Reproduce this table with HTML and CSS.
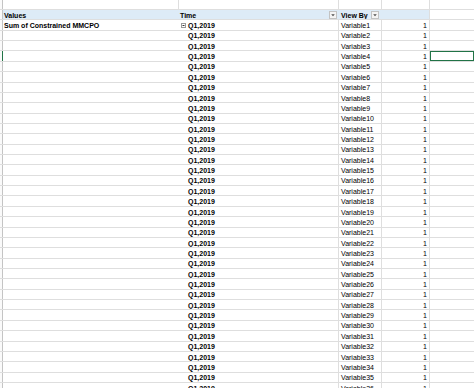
FILE: index.html
```
<!DOCTYPE html>
<html>
<head>
<meta charset="utf-8">
<link rel="stylesheet" href="styles.css">
</head>
<body>
<div class="sheet">
  <div class="row top"><div class="rh"></div><div class="ca"></div><div class="cb"></div><div class="cc"></div><div class="cd"></div><div class="ce"></div></div>
  <div class="row hdr"><div class="rh"></div><div class="ca b">Values</div><div class="cb b"><span class="grow">Time</span><span class="dd"><svg width="8" height="8" viewBox="0 0 8 8"><path d="M2.2 3.2h3.6L4 5.2z" fill="#505050"/></svg></span></div><div class="cc b"><span>View By</span><span class="dd"><svg width="8" height="8" viewBox="0 0 8 8"><path d="M2.2 3.2h3.6L4 5.2z" fill="#505050"/></svg></span></div><div class="cd"></div><div class="ce"></div></div>
  <div class="row"><div class="rh"></div><div class="ca b">Sum of Constrained MMCPO</div><div class="cb b q"><span class="tog"><svg width="5" height="5" viewBox="0 0 5 5"><rect x="0.5" y="0.5" width="4" height="4" fill="#fff" stroke="#9a9a9a" stroke-width="1"/><path d="M1.5 2.5h2" stroke="#333" stroke-width="1"/></svg></span>Q1,2019</div><div class="cc">Variable1</div><div class="cd">1</div><div class="ce"></div></div>
  <div class="row"><div class="rh"></div><div class="ca"></div><div class="cb b q">Q1,2019</div><div class="cc">Variable2</div><div class="cd">1</div><div class="ce"></div></div>
  <div class="row"><div class="rh"></div><div class="ca"></div><div class="cb b q">Q1,2019</div><div class="cc">Variable3</div><div class="cd">1</div><div class="ce"></div></div>
  <div class="row"><div class="rh act"></div><div class="ca"></div><div class="cb b q">Q1,2019</div><div class="cc">Variable4</div><div class="cd">1</div><div class="ce sel"></div></div>
  <div class="row"><div class="rh"></div><div class="ca"></div><div class="cb b q">Q1,2019</div><div class="cc">Variable5</div><div class="cd">1</div><div class="ce"></div></div>
  <div class="row"><div class="rh"></div><div class="ca"></div><div class="cb b q">Q1,2019</div><div class="cc">Variable6</div><div class="cd">1</div><div class="ce"></div></div>
  <div class="row"><div class="rh"></div><div class="ca"></div><div class="cb b q">Q1,2019</div><div class="cc">Variable7</div><div class="cd">1</div><div class="ce"></div></div>
  <div class="row"><div class="rh"></div><div class="ca"></div><div class="cb b q">Q1,2019</div><div class="cc">Variable8</div><div class="cd">1</div><div class="ce"></div></div>
  <div class="row"><div class="rh"></div><div class="ca"></div><div class="cb b q">Q1,2019</div><div class="cc">Variable9</div><div class="cd">1</div><div class="ce"></div></div>
  <div class="row"><div class="rh"></div><div class="ca"></div><div class="cb b q">Q1,2019</div><div class="cc">Variable10</div><div class="cd">1</div><div class="ce"></div></div>
  <div class="row"><div class="rh"></div><div class="ca"></div><div class="cb b q">Q1,2019</div><div class="cc">Variable11</div><div class="cd">1</div><div class="ce"></div></div>
  <div class="row"><div class="rh"></div><div class="ca"></div><div class="cb b q">Q1,2019</div><div class="cc">Variable12</div><div class="cd">1</div><div class="ce"></div></div>
  <div class="row"><div class="rh"></div><div class="ca"></div><div class="cb b q">Q1,2019</div><div class="cc">Variable13</div><div class="cd">1</div><div class="ce"></div></div>
  <div class="row"><div class="rh"></div><div class="ca"></div><div class="cb b q">Q1,2019</div><div class="cc">Variable14</div><div class="cd">1</div><div class="ce"></div></div>
  <div class="row"><div class="rh"></div><div class="ca"></div><div class="cb b q">Q1,2019</div><div class="cc">Variable15</div><div class="cd">1</div><div class="ce"></div></div>
  <div class="row"><div class="rh"></div><div class="ca"></div><div class="cb b q">Q1,2019</div><div class="cc">Variable16</div><div class="cd">1</div><div class="ce"></div></div>
  <div class="row"><div class="rh"></div><div class="ca"></div><div class="cb b q">Q1,2019</div><div class="cc">Variable17</div><div class="cd">1</div><div class="ce"></div></div>
  <div class="row"><div class="rh"></div><div class="ca"></div><div class="cb b q">Q1,2019</div><div class="cc">Variable18</div><div class="cd">1</div><div class="ce"></div></div>
  <div class="row"><div class="rh"></div><div class="ca"></div><div class="cb b q">Q1,2019</div><div class="cc">Variable19</div><div class="cd">1</div><div class="ce"></div></div>
  <div class="row"><div class="rh"></div><div class="ca"></div><div class="cb b q">Q1,2019</div><div class="cc">Variable20</div><div class="cd">1</div><div class="ce"></div></div>
  <div class="row"><div class="rh"></div><div class="ca"></div><div class="cb b q">Q1,2019</div><div class="cc">Variable21</div><div class="cd">1</div><div class="ce"></div></div>
  <div class="row"><div class="rh"></div><div class="ca"></div><div class="cb b q">Q1,2019</div><div class="cc">Variable22</div><div class="cd">1</div><div class="ce"></div></div>
  <div class="row"><div class="rh"></div><div class="ca"></div><div class="cb b q">Q1,2019</div><div class="cc">Variable23</div><div class="cd">1</div><div class="ce"></div></div>
  <div class="row"><div class="rh"></div><div class="ca"></div><div class="cb b q">Q1,2019</div><div class="cc">Variable24</div><div class="cd">1</div><div class="ce"></div></div>
  <div class="row"><div class="rh"></div><div class="ca"></div><div class="cb b q">Q1,2019</div><div class="cc">Variable25</div><div class="cd">1</div><div class="ce"></div></div>
  <div class="row"><div class="rh"></div><div class="ca"></div><div class="cb b q">Q1,2019</div><div class="cc">Variable26</div><div class="cd">1</div><div class="ce"></div></div>
  <div class="row"><div class="rh"></div><div class="ca"></div><div class="cb b q">Q1,2019</div><div class="cc">Variable27</div><div class="cd">1</div><div class="ce"></div></div>
  <div class="row"><div class="rh"></div><div class="ca"></div><div class="cb b q">Q1,2019</div><div class="cc">Variable28</div><div class="cd">1</div><div class="ce"></div></div>
  <div class="row"><div class="rh"></div><div class="ca"></div><div class="cb b q">Q1,2019</div><div class="cc">Variable29</div><div class="cd">1</div><div class="ce"></div></div>
  <div class="row"><div class="rh"></div><div class="ca"></div><div class="cb b q">Q1,2019</div><div class="cc">Variable30</div><div class="cd">1</div><div class="ce"></div></div>
  <div class="row"><div class="rh"></div><div class="ca"></div><div class="cb b q">Q1,2019</div><div class="cc">Variable31</div><div class="cd">1</div><div class="ce"></div></div>
  <div class="row"><div class="rh"></div><div class="ca"></div><div class="cb b q">Q1,2019</div><div class="cc">Variable32</div><div class="cd">1</div><div class="ce"></div></div>
  <div class="row"><div class="rh"></div><div class="ca"></div><div class="cb b q">Q1,2019</div><div class="cc">Variable33</div><div class="cd">1</div><div class="ce"></div></div>
  <div class="row"><div class="rh"></div><div class="ca"></div><div class="cb b q">Q1,2019</div><div class="cc">Variable34</div><div class="cd">1</div><div class="ce"></div></div>
  <div class="row"><div class="rh"></div><div class="ca"></div><div class="cb b q">Q1,2019</div><div class="cc">Variable35</div><div class="cd">1</div><div class="ce"></div></div>
  <div class="row"><div class="rh"></div><div class="ca"></div><div class="cb b q">Q1,2019</div><div class="cc">Variable36</div><div class="cd">1</div><div class="ce"></div></div>
</div>
</body>
</html>
```
FILE: styles.css
```
* { box-sizing: border-box; margin: 0; padding: 0; }
html, body { width: 474px; height: 388px; overflow: hidden; background: #fff; }
body {
  font-family: "Liberation Sans", Arial, sans-serif;
  font-size: 7px;
  color: #000;
}
.sheet { display: flex; flex-direction: column; }
.row {
  display: grid;
  grid-template-columns: 3px 176px 160px 43px 48px 44px;
  height: 10.37px;
  flex: none;
  border-bottom: 1px solid #dedede;
}
.row.top { height: 10px; }
.row > div {
  display: flex;
  align-items: center;
  white-space: nowrap;
  overflow: hidden;
  line-height: 1;
  padding-top: 1px;
}
.rh { border-right: 1px solid #c4c4c4; background: #fafafa; }
.rh.act { border-right: 1px solid #217346; }
.ca { padding-left: 1px; }
.cb { padding-left: 1px; border-right: 1px solid #dedede; }
.cc { padding-left: 2px; border-right: 1px solid #dedede; }
.cd { justify-content: flex-end; padding-right: 2px; border-right: 1px solid #dedede; }
.top .ca { border-right: 1px solid #dedede; }
.b { font-weight: bold; }
.q { padding-left: 9px; }
.tog { display: flex; width: 6px; margin-left: -7px; margin-right: 1px; }
.hdr .ca, .hdr .cb, .hdr .cc, .hdr .cd { background: #ddebf7; }
.hdr .ca, .hdr .cb { border-right: none; }
.hdr .cb { padding-right: 2px; }
.hdr .cc { border-right: none; }
.grow { flex: 1; }
.dd {
  display: flex;
  width: 8px;
  height: 8px;
  border: 1px solid #c3c3c3;
  background: #f4f4f4;
  margin-left: 3px;
  align-items: center;
  justify-content: center;
}
.dd svg { flex: none; }
.sel { box-shadow: inset 0 0 0 1px #217346; }
```
